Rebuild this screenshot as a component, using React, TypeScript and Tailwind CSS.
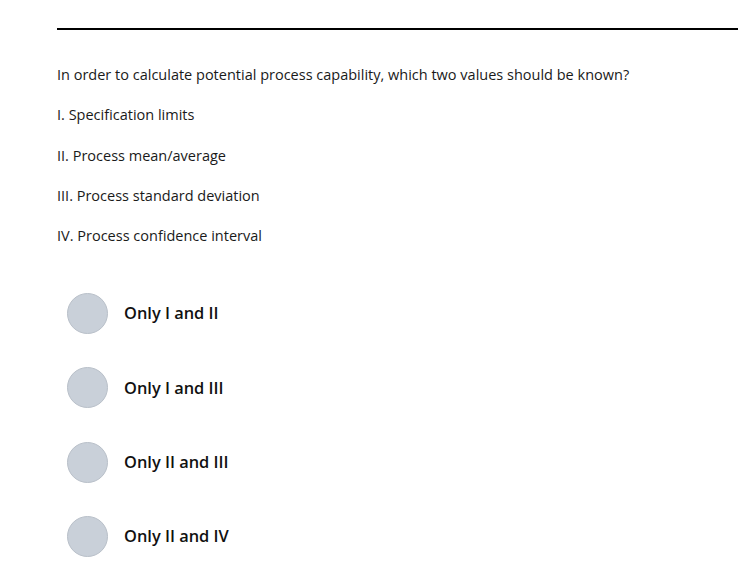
const statements = [
  "I. Specification limits",
  "II. Process mean/average",
  "III. Process standard deviation",
  "IV. Process confidence interval",
];

const options = ["Only I and II", "Only I and III", "Only II and III", "Only II and IV"];

export default function App() {
  return (
    <div className="w-[753px] h-[587px] bg-white font-['Open_Sans',sans-serif] text-[#1a1a1a] pt-[28px]">
      <div className="ml-[57px] mr-[15px] h-[2px] bg-black" />
      <div className="ml-[57px] mt-[34px] flex flex-col gap-[19.3px] text-[14.5px] leading-[21px]">
        <p>In order to calculate potential process capability, which two values should be known?</p>
        {statements.map((s) => (
          <p key={s}>{s}</p>
        ))}
      </div>
      <div className="ml-[67px] mt-[47px] flex flex-col gap-[33.3px]">
        {options.map((o) => (
          <label key={o} className="flex items-center gap-[16px] cursor-pointer">
            <span className="w-[41px] h-[41px] rounded-full bg-[#c9d0d9] border border-[#b9c0c9]" />
            <span className="text-[16.4px] font-semibold text-[#111]">{o}</span>
          </label>
        ))}
      </div>
    </div>
  );
}
